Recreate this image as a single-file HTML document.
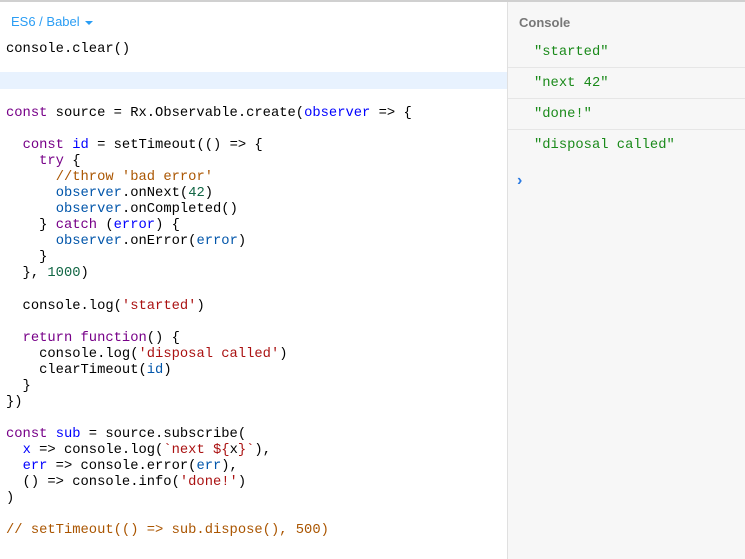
<!DOCTYPE html>
<html><head><meta charset="utf-8"><style>
body{margin:0;width:745px;height:559px;overflow:hidden;background:#fff;font-family:"Liberation Sans",sans-serif;position:relative}
.top{position:absolute;left:0;top:0;width:745px;height:2px;background:#d0d0d0}
.lang{position:absolute;left:11px;top:14px;font-size:13px;color:#2a9df4}
.lang:after{content:"";display:inline-block;margin-left:5px;vertical-align:middle;border-left:4px solid transparent;border-right:4px solid transparent;border-top:4px solid #2a9df4}
.hl{position:absolute;left:0;top:72px;width:507px;height:17px;background:#e8f2fe}
pre{position:absolute;left:6px;top:42px;margin:0;font-family:"Liberation Mono",monospace;font-size:13.8px;line-height:16.03px;color:#000}
.k{color:#708}.d{color:#00f}.v{color:#05a}.c{color:#a50}.n{color:#164}.s{color:#a11}
.con{position:absolute;left:507px;top:2px;width:238px;height:557px;background:#f7f7f7;border-left:1px solid #e0e0e0}
.ct{position:absolute;left:11px;top:13px;font-size:13px;color:#777;font-weight:bold}
.row{position:absolute;left:0;width:238px;height:31px;border-bottom:1px solid #e6e6e6;font-family:"Liberation Mono",monospace;font-size:13.8px;color:#1a8a1a}
.row span{position:absolute;left:26px;top:9px}
.pr{position:absolute;left:9px;top:170px;color:#2a7ae2;font-weight:bold;font-size:16px}
</style></head><body>
<div class="top"></div>
<div class="lang">ES6 / Babel</div>
<div class="hl"></div>
<pre>console.clear()



<span class="k">const</span> source = Rx.Observable.create(<span class="d">observer</span> => {

  <span class="k">const</span> <span class="d">id</span> = setTimeout(() => {
    <span class="k">try</span> {
      <span class="c">//throw 'bad error'</span>
      <span class="v">observer</span>.onNext(<span class="n">42</span>)
      <span class="v">observer</span>.onCompleted()
    } <span class="k">catch</span> (<span class="d">error</span>) {
      <span class="v">observer</span>.onError(<span class="v">error</span>)
    }
  }, <span class="n">1000</span>)

  console.log(<span class="s">'started'</span>)

  <span class="k">return</span> <span class="k">function</span>() {
    console.log(<span class="s">'disposal called'</span>)
    clearTimeout(<span class="v">id</span>)
  }
})

<span class="k">const</span> <span class="d">sub</span> = source.subscribe(
  <span class="d">x</span> => console.log(<span class="s">`next ${</span>x<span class="s">}`</span>),
  <span class="d">err</span> => console.error(<span class="v">err</span>),
  () => console.info(<span class="s">'done!'</span>)
)

<span class="c">// setTimeout(() => sub.dispose(), 500)</span></pre>
<div class="con">
<div class="ct">Console</div>
<div class="row" style="top:34px"><span>"started"</span></div>
<div class="row" style="top:65px"><span>"next 42"</span></div>
<div class="row" style="top:96px"><span>"done!"</span></div>
<div class="row" style="top:127px;border-bottom:none"><span>"disposal called"</span></div>
<div class="pr">›</div>
</div>
</body></html>
